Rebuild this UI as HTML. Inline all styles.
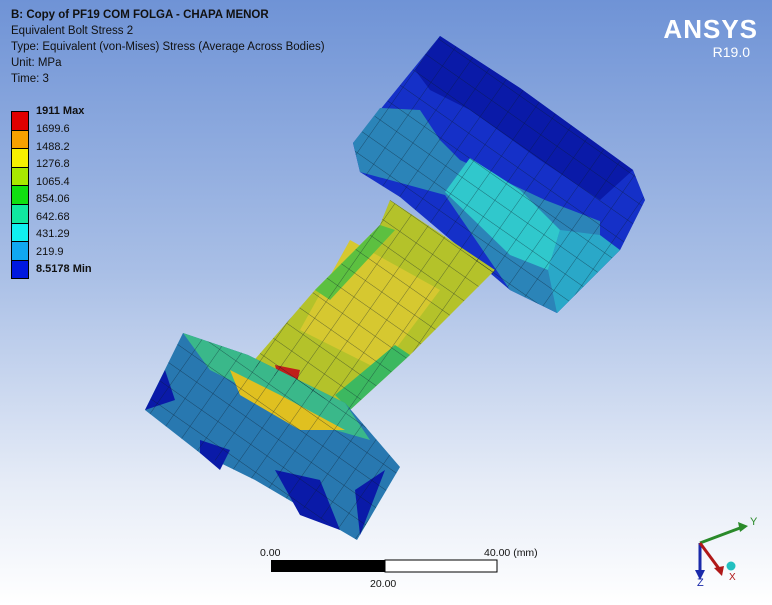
<!DOCTYPE html>
<html><head><style>
body{margin:0;width:772px;height:605px;overflow:hidden;font-family:"Liberation Sans",sans-serif;}
.bg{position:absolute;left:0;top:0;width:772px;height:605px;background:linear-gradient(#6f93d6 0%,#a9bfe6 45%,#e6ecf7 80%,#ffffff 100%);}
.t{position:absolute;left:11px;font-size:11.5px;color:#111;line-height:15.5px;white-space:nowrap}
.leg{position:absolute;left:11px;top:111px;}
.sw{width:16px;height:17.6px;border:1px solid #000;border-top:none;}
.lab{position:absolute;left:25px;font-size:11px;color:#111;white-space:nowrap}
</style></head><body>
<div class="bg"></div>
<svg width="772" height="605" style="position:absolute;left:0;top:0">
<defs><pattern id="g" width="20" height="20" patternUnits="userSpaceOnUse" patternTransform="rotate(35)"><path d="M0 0H20M0 0V20" stroke="#0a1a2a" stroke-width="0.7" fill="none" opacity=".7"/></pattern></defs>
<!-- upper head -->
<polygon points="353,143 440,36 520,88 633,170 645,200 620,250 557,313 510,290 400,197 360,172" fill="#1530c8"/>
<polygon points="440,36 520,88 633,170 600,200 540,160 470,110 430,90 415,70" fill="#0a1aa8"/>
<polygon points="353,143 380,108 420,110 440,140 460,160 545,200 610,225 620,250 557,313 510,290 445,195 360,172" fill="#2b84b8"/>
<polygon points="445,192 470,158 520,190 560,230 548,270 510,255" fill="#30c8cc"/>
<polygon points="560,230 600,235 620,250 557,313 548,270" fill="#2aa8c8"/>
<polygon points="600,200 645,200 620,250 600,235" fill="#1530c8"/>
<!-- shank -->
<polygon points="390,200 495,270 410,355 350,410 250,365 315,290 380,225" fill="#b4c22a"/>
<polygon points="350,240 440,290 380,370 300,330" fill="#d6c830"/>
<polygon points="315,290 380,225 395,230 330,300" fill="#5cc040"/>
<polygon points="410,355 350,410 335,395 395,345" fill="#3cb860"/>
<polygon points="275,365 300,370 295,390 280,385" fill="#c0201a"/>
<!-- lower head -->
<polygon points="183,333 248,355 345,403 400,467 357,540 255,480 200,453 145,410" fill="#2878b0"/>
<polygon points="183,333 248,355 345,403 370,440 300,420 230,380 210,370" fill="#3ab88a"/>
<polygon points="230,370 280,395 345,430 300,430 240,395" fill="#e0c020"/>
<polygon points="145,410 165,370 175,400" fill="#0a1aa8"/>
<polygon points="275,470 320,480 340,530 300,515" fill="#0a1aa8"/>
<polygon points="355,490 385,470 360,535" fill="#0a1aa8"/>
<polygon points="200,440 230,450 220,470 200,453" fill="#0a1aa8"/>
<g fill="url(#g)">
<polygon points="353,143 440,36 520,88 633,170 645,200 620,250 557,313 510,290 400,197 360,172"/>
<polygon points="390,200 495,270 410,355 350,410 250,365 315,290 380,225"/>
<polygon points="183,333 248,355 345,403 400,467 357,540 255,480 200,453 145,410"/>
</g>
<!-- triad -->
<line x1="700" y1="543" x2="740" y2="528" stroke="#2a8a2a" stroke-width="3"/>
<polygon points="738,522 748,526 740,532" fill="#2a8a2a"/>
<line x1="700" y1="543" x2="700" y2="575" stroke="#1a2aaa" stroke-width="3"/>
<polygon points="695,570 705,570 700,580" fill="#1a2aaa"/>
<line x1="700" y1="543" x2="720" y2="570" stroke="#b01818" stroke-width="3"/>
<polygon points="714,568 724,566 722,576" fill="#b01818"/>
<circle cx="731" cy="566" r="4.5" fill="#22c0c0"/>
<text x="750" y="525" font-size="11" fill="#2a8a2a" font-family="Liberation Sans">Y</text>
<text x="697" y="586" font-size="11" fill="#1a2aaa" font-family="Liberation Sans">Z</text>
<text x="729" y="580" font-size="10" fill="#b01818" font-family="Liberation Sans">X</text>
<!-- scale -->
<rect x="271" y="560" width="114" height="12" fill="#000"/>
<rect x="385" y="560" width="112" height="12" fill="#fff" stroke="#000"/>
<text x="260" y="556" font-size="10.5" fill="#111" font-family="Liberation Sans">0.00</text>
<text x="484" y="556" font-size="10.5" fill="#111" font-family="Liberation Sans">40.00 (mm)</text>
<text x="370" y="587" font-size="10.5" fill="#111" font-family="Liberation Sans">20.00</text>
</svg>
<div class="t" style="top:8px;font-weight:bold">B: Copy of PF19 COM FOLGA - CHAPA MENOR</div>
<div class="t" style="top:24px">Equivalent Bolt Stress 2</div>
<div class="t" style="top:40px">Type: Equivalent (von-Mises) Stress (Average Across Bodies)</div>
<div class="t" style="top:56px">Unit: MPa</div>
<div class="t" style="top:72px">Time: 3</div>
<div style="position:absolute;right:14px;top:14px;color:#fff;font-weight:bold;font-size:26px;letter-spacing:1px">ANSYS</div>
<div style="position:absolute;right:22px;top:44px;color:#fff;font-size:14px">R19.0</div>
<div class="leg">
<div style="border-top:1px solid #000">
<div class="sw" style="background:#e00000"></div><div class="sw" style="background:#f7a000"></div><div class="sw" style="background:#f7f000"></div><div class="sw" style="background:#a8e800"></div><div class="sw" style="background:#10e010"></div><div class="sw" style="background:#10e8a0"></div><div class="sw" style="background:#10f0f0"></div><div class="sw" style="background:#10a8f0"></div><div class="sw" style="background:#0018e0"></div>
</div>
<div class="lab" style="top:-6px;font-weight:bold">1911 Max</div>
<div class="lab" style="top:12px">1699.6</div>
<div class="lab" style="top:30px">1488.2</div>
<div class="lab" style="top:47px">1276.8</div>
<div class="lab" style="top:65px">1065.4</div>
<div class="lab" style="top:82px">854.06</div>
<div class="lab" style="top:100px">642.68</div>
<div class="lab" style="top:117px">431.29</div>
<div class="lab" style="top:135px">219.9</div>
<div class="lab" style="top:152px;font-weight:bold">8.5178 Min</div>
</div>
</body></html>
